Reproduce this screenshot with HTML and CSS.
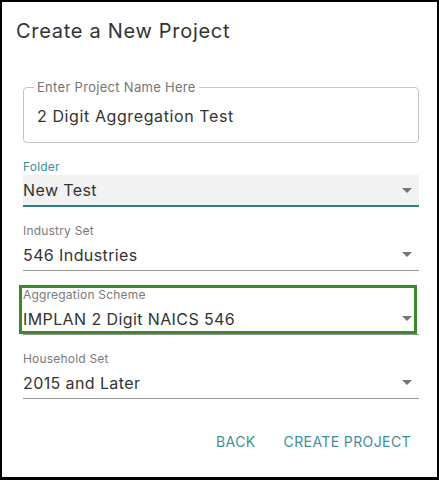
FILE: index.html
```html
<!DOCTYPE html>
<html lang="en">
<head>
<meta charset="utf-8">
<title>Create a New Project</title>
<link rel="stylesheet" href="styles.css">
</head>
<body>
<div class="dialog">
  <h2 class="title">Create a New Project</h2>
  <div class="content">
    <fieldset class="outlined">
      <legend>Enter Project Name Here</legend>
      <div class="outlined-value">2 Digit Aggregation Test</div>
    </fieldset>

    <div class="field focused">
      <div class="label">Folder</div>
      <div class="select filled">
        <span class="value">New Test</span>
        <svg class="arrow" width="10" height="5" viewBox="0 0 10 5"><path d="M0 0h10L5 5z"/></svg>
      </div>
    </div>

    <div class="field">
      <div class="label">Industry Set</div>
      <div class="select">
        <span class="value">546 Industries</span>
        <svg class="arrow" width="10" height="5" viewBox="0 0 10 5"><path d="M0 0h10L5 5z"/></svg>
      </div>
    </div>

    <div class="field highlighted">
      <div class="label">Aggregation Scheme</div>
      <div class="select">
        <span class="value">IMPLAN 2 Digit NAICS 546</span>
        <svg class="arrow" width="10" height="5" viewBox="0 0 10 5"><path d="M0 0h10L5 5z"/></svg>
      </div>
      <div class="highlight-box"></div>
    </div>

    <div class="field">
      <div class="label">Household Set</div>
      <div class="select">
        <span class="value">2015 and Later</span>
        <svg class="arrow" width="10" height="5" viewBox="0 0 10 5"><path d="M0 0h10L5 5z"/></svg>
      </div>
    </div>
  </div>
  <div class="actions">
    <button class="btn">Back</button>
    <button class="btn">Create Project</button>
  </div>
</div>
</body>
</html>
```
FILE: styles.css
```css
html, body {
  margin: 0;
  padding: 0;
  background: #fff;
}
body {
  font-family: Inter, "Open Sans", sans-serif;
  color: #333;
}
.dialog {
  box-sizing: border-box;
  width: 439px;
  height: 480px;
  border: 2px solid #000;
  border-bottom-width: 3px;
  background: #fff;
  padding-top: 17px;
}
.title {
  margin: 0;
  padding-left: 14px;
  font-size: 20px;
  line-height: 24px;
  font-weight: 400;
  color: #333;
  letter-spacing: 0.7px;
}
.content {
  padding: 0 18px 0 21px;
  display: flex;
  flex-direction: column;
  gap: 16px;
}
.outlined {
  margin: 37px 0 0;
  padding: 0 10px 0 10px;
  border: 1px solid #c4c4c4;
  border-radius: 4px;
  height: 61px;
  min-width: 0;
}
.outlined legend {
  padding: 0 3px;
  font-size: 13px;
  line-height: 14px;
  color: #757575;
  letter-spacing: 0.3px;
}
.outlined-value {
  font-size: 16px;
  line-height: 20px;
  padding: 12px 3px 0;
  letter-spacing: 0.6px;
}
.field {
  position: relative;
  display: flex;
  flex-direction: column;
}
.label {
  font-size: 12px;
  line-height: 16px;
  color: #7a7a7a;
  letter-spacing: 0.2px;
}
.focused .label {
  color: #3f8f99;
}
.select {
  display: flex;
  align-items: center;
  justify-content: space-between;
  height: 31px;
  border-bottom: 1px solid #949494;
  padding-right: 7px;
}
.select.filled {
  background: #f2f2f2;
  height: 30px;
  border-bottom: 2px solid #2e7f88;
}
.value {
  font-size: 16px;
  letter-spacing: 0.4px;
  color: #333;
}
.arrow {
  fill: #757575;
  display: block;
}
.highlight-box {
  position: absolute;
  left: -4px;
  right: 2px;
  top: -2px;
  bottom: 1px;
  border: 3px solid #3b8a2a;
  pointer-events: none;
}
.actions {
  display: flex;
  justify-content: flex-end;
  gap: 12px;
  padding: 27px 18px 0 0;
}
.btn {
  font-family: inherit;
  font-size: 14px;
  line-height: 20px;
  text-transform: uppercase;
  letter-spacing: 0.4px;
  color: #3f8f99;
  background: none;
  border: 0;
  padding: 6px 8px;
  cursor: pointer;
}
```
